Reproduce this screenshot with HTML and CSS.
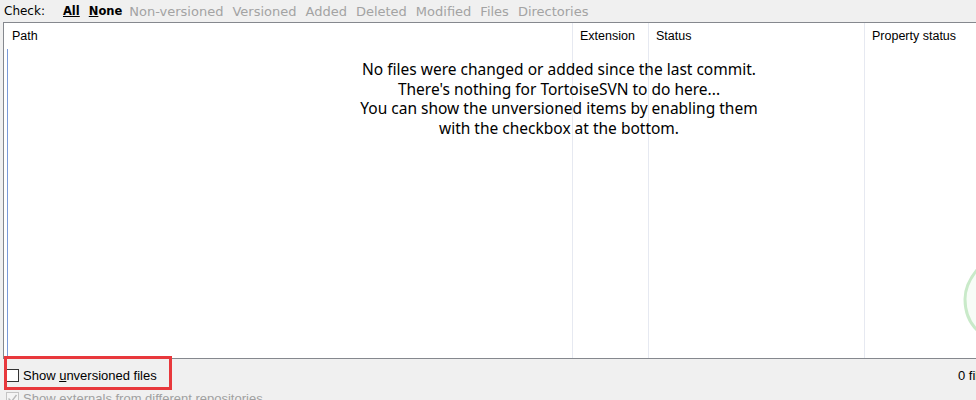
FILE: index.html
```html
<!DOCTYPE html>
<html>
<head>
<meta charset="utf-8">
<link rel="stylesheet" href="styles.css">
</head>
<body>
<div class="page">
  <div class="checkbar">
    <span class="lbl">Check:</span>
    <span class="act all"><u>All</u></span>
    <span class="act none"><u>N</u>one</span>
    <span class="dis first">Non-versioned</span>
    <span class="dis">Versioned</span>
    <span class="dis">Added</span>
    <span class="dis">Deleted</span>
    <span class="dis">Modified</span>
    <span class="dis">Files</span>
    <span class="dis">Directories</span>
  </div>
  <div class="list">
    <div class="col c-path"><div class="hd">Path</div></div>
    <div class="col c-ext"><div class="hd">Extension</div></div>
    <div class="col c-status"><div class="hd">Status</div></div>
    <div class="col c-prop"><div class="hd">Property status</div></div>
    <div class="focus"></div>
    <div class="message">
      <p>No files were changed or added since the last commit.</p>
      <p>There's nothing for TortoiseSVN to do here...</p>
      <p>You can show the unversioned items by enabling them</p>
      <p>with the checkbox at the bottom.</p>
    </div>
    <svg class="watermark" width="100" height="110" viewBox="0 0 100 110">
      <path d="M50 4 C34 16 10 34 10 58 C10 84 28 100 50 100 C72 100 90 84 90 58 C90 34 66 16 50 4 Z" fill="#f7fcf7" stroke="#c9eac9" stroke-width="3"/>
    </svg>
  </div>
  <div class="footer">
    <div class="row">
      <label class="opt"><span class="box"></span><span>Show <u>u</u>nversioned files</span></label>
      <span class="count">0 files selected, 0 files total</span>
    </div>
    <div class="row">
      <label class="opt disabled"><span class="box checked"><svg width="11" height="11" viewBox="0 0 11 11"><path d="M1.5 5.5 L4.5 8.5 L9.5 2" fill="none" stroke="#b8b8b8" stroke-width="1.4"/></svg></span><span>Show externals from different repositories</span></label>
    </div>
  </div>
  <div class="highlight"></div>
</div>
</body>
</html>
```

FILE: styles.css
```css
html, body {
  margin: 0;
  padding: 0;
  background: #f0f0f0;
  overflow: hidden;
  width: 976px;
  height: 400px;
}
.page {
  position: relative;
  width: 1120px;
  height: 400px;
  font-family: "Liberation Sans", Arial, sans-serif;
  color: #000;
}
.checkbar {
  height: 22px;
  display: flex;
  align-items: center;
  padding-left: 4px;
  font-family: "DejaVu Sans", sans-serif;
  font-size: 13px;
  gap: 9px;
}
.checkbar .lbl { font-size: 12px; margin-right: 9px; }
.checkbar .act { font-weight: bold; font-size: 11.5px; }
.checkbar .none { margin-left: 0; }
.checkbar .first { margin-left: -2px; }
.checkbar .dis { color: #a3a3a3; }
.list {
  position: relative;
  margin-left: 3px;
  width: 1110px;
  height: 335px;
  border: 1px solid #85888e;
  background: #fff;
  display: grid;
  grid-template-columns: 569px 76px 216px 1fr;
  overflow: hidden;
}
.col {
  border-right: 1px solid #e6e9f1;
}
.c-prop { border-right: none; }
.hd {
  height: 27px;
  line-height: 27px;
  padding-left: 7px;
  font-size: 12.5px;
  color: #000;
}
.c-path .hd { padding-left: 8px; }
.focus {
  position: absolute;
  left: 3px;
  top: 26px;
  bottom: 0;
  width: 1px;
  background: #7a9ad8;
}
.message {
  position: absolute;
  left: 0;
  right: 0;
  top: 37px;
  text-align: center;
  font-family: "Noto Sans", "Open Sans", sans-serif;
  font-size: 15.5px;
}
.message p {
  margin: 0;
  height: 19.7px;
  line-height: 19.7px;
}
.watermark {
  position: absolute;
  left: 951px;
  top: 218px;
}
.footer {
  padding-top: 9px;
  font-size: 13px;
}
.row {
  display: grid;
  grid-template-columns: 958px auto;
  height: 23px;
  align-items: start;
}
.opt {
  display: flex;
  align-items: center;
  padding-left: 6px;
  height: 15px;
}
.box {
  width: 11px;
  height: 11px;
  border: 1px solid #333;
  background: #fff;
  margin-right: 4px;
  display: flex;
  align-items: center;
  justify-content: center;
}
.disabled { color: #a0a0a0; }
.disabled .box { border-color: #c4c4c4; background: #f4f4f4; }
.count { line-height: 15px; }
.highlight {
  position: absolute;
  left: 4px;
  top: 356px;
  width: 162px;
  height: 28px;
  border: 3px solid #e8383c;
}
```
